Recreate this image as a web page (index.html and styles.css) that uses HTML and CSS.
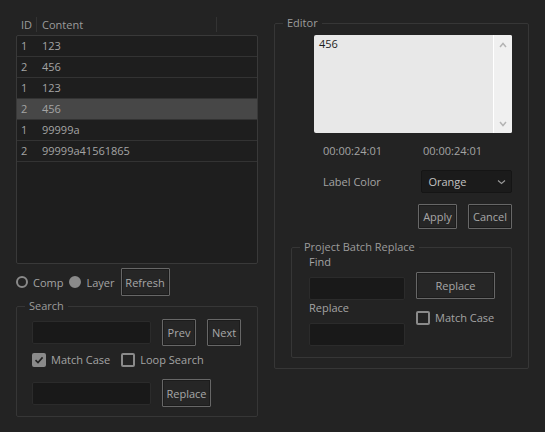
FILE: index.html
```html
<!DOCTYPE html>
<html lang="en">

<head>
    <title>Text Layer Editor</title>
    <meta charset="UTF-8">
    <link rel="stylesheet" href="styles.css">
</head>

<body>
    <div class="panel">
        <div class="left">
            <div class="list-head">
                <div class="col-id">ID</div>
                <div class="col-content">Content</div>
            </div>
            <div class="list">
                <div class="row"><span class="cell-id">1</span><span>123</span></div>
                <div class="row"><span class="cell-id">2</span><span>456</span></div>
                <div class="row"><span class="cell-id">1</span><span>123</span></div>
                <div class="row selected"><span class="cell-id">2</span><span>456</span></div>
                <div class="row"><span class="cell-id">1</span><span>99999a</span></div>
                <div class="row"><span class="cell-id">2</span><span>99999a41561865</span></div>
            </div>

            <div class="source-row">
                <label class="radio"><span class="dot"></span>Comp</label>
                <label class="radio"><span class="dot on"></span>Layer</label>
                <button class="btn refresh">Refresh</button>
            </div>

            <fieldset class="group search">
                <legend>Search</legend>
                <div class="group-body">
                    <div class="line">
                        <input class="field wide" type="text">
                        <button class="btn small">Prev</button>
                        <button class="btn small">Next</button>
                    </div>
                    <div class="checks">
                        <label class="check"><span class="box on"><svg width="10" height="10" viewBox="0 0 10 10"><path d="M1.5 5.2 L4 7.6 L8.6 2.4" fill="none" stroke="#222" stroke-width="1.6"/></svg></span>Match Case</label>
                        <label class="check"><span class="box"></span>Loop Search</label>
                    </div>
                    <div class="line">
                        <input class="field wide" type="text">
                        <button class="btn replace-small">Replace</button>
                    </div>
                </div>
            </fieldset>
        </div>

        <div class="right">
            <fieldset class="group editor">
                <legend>Editor</legend>
                <div class="editor-body">
                    <div class="text-box">
                        <div class="text-value">456</div>
                        <div class="scroll">
                            <svg width="8" height="6" viewBox="0 0 8 6"><path d="M1 5 L4 1.5 L7 5" fill="none" stroke="#b4b4b4" stroke-width="1.5"/></svg>
                            <svg width="8" height="6" viewBox="0 0 8 6"><path d="M1 1 L4 4.5 L7 1" fill="none" stroke="#b4b4b4" stroke-width="1.5"/></svg>
                        </div>
                    </div>

                    <div class="times">
                        <span class="time">00:00:24:01</span>
                        <span>00:00:24:01</span>
                    </div>

                    <div class="label-row">
                        <span class="label-name">Label Color</span>
                        <div class="select">
                            <span>Orange</span>
                            <svg width="9" height="6" viewBox="0 0 9 6"><path d="M1 1.5 L4.5 4.5 L8 1.5" fill="none" stroke="#9a9a9a" stroke-width="1.1"/></svg>
                        </div>
                    </div>

                    <div class="actions">
                        <button class="btn apply">Apply</button>
                        <button class="btn cancel">Cancel</button>
                    </div>

                    <fieldset class="group batch">
                        <legend>Project Batch Replace</legend>
                        <div class="batch-body">
                            <div class="batch-fields">
                                <div class="caption">Find</div>
                                <input class="field narrow" type="text">
                                <div class="caption second">Replace</div>
                                <input class="field narrow" type="text">
                            </div>
                            <div class="batch-side">
                                <button class="btn replace-big">Replace</button>
                                <label class="check"><span class="box"></span>Match Case</label>
                            </div>
                        </div>
                    </fieldset>
                </div>
            </fieldset>
        </div>
    </div>
</body>

</html>
```

FILE: styles.css
```css
body {
    margin: 0;
    background: #232323;
    font-family: "Open Sans", "Noto Sans", Arial, sans-serif;
    font-size: 11px;
    color: #a4a4a4;
}

.panel {
    display: flex;
    width: 545px;
    height: 432px;
}

/* left side */

.left {
    width: 242px;
    margin-left: 16px;
    padding-top: 17px;
}

.list-head {
    display: flex;
    height: 18px;
    line-height: 15px;
    color: #9c9c9c;
}

.col-id {
    width: 15px;
    padding-left: 5px;
    border-right: 1px solid #333;
    height: 15px;
}

.col-content {
    width: 174px;
    padding-left: 5px;
    border-right: 1px solid #333;
    height: 15px;
}

.list {
    height: 227px;
    background: #1e1e1e;
    border: 1px solid #393939;
    border-radius: 2px;
}

.row {
    display: flex;
    height: 20px;
    line-height: 20px;
    border-bottom: 1px solid #333;
    padding-left: 4px;
}

.row.selected {
    background: #474747;
}

.cell-id {
    width: 21px;
}

.source-row {
    display: flex;
    align-items: center;
    margin-top: 4px;
    height: 28px;
}

.radio {
    display: flex;
    align-items: center;
    margin-right: 6px;
}

.dot {
    width: 8px;
    height: 8px;
    border: 2px solid #8a8a8a;
    border-radius: 50%;
    margin-right: 5px;
}

.dot.on {
    background: #8a8a8a;
}

.btn {
    font-family: "Open Sans", "Noto Sans", Arial, sans-serif;
    font-size: 11px;
    color: #a8a8a8;
    background: #262626;
    border: 1px solid #676767;
    box-shadow: inset 0 0 0 1px #1c1c1c;
    border-radius: 1px;
    padding: 0;
    cursor: pointer;
}

.refresh {
    width: 49px;
    height: 28px;
}

.group {
    border: 1px solid #363636;
    border-radius: 2px;
    margin: 0;
    padding: 0;
    min-width: 0;
}

.group legend {
    margin-left: 8px;
    padding: 0 4px;
    line-height: 14px;
    color: #9c9c9c;
}

.search {
    margin-top: 3px;
    height: 116px;
}

.group-body {
    padding: 6px 0 0 15px;
}

.line {
    display: flex;
    align-items: center;
    gap: 11px;
}

.field {
    height: 21px;
    background: #191919;
    border: 1px solid #2b2b2b;
    border-radius: 2px;
    padding: 0;
    box-sizing: content-box;
}

.wide {
    width: 117px;
}

.small {
    width: 34px;
    height: 27px;
}

.replace-small {
    width: 49px;
    height: 28px;
}

.checks {
    display: flex;
    gap: 11px;
    height: 14px;
    margin: 7px 0 12px;
}

.check {
    display: flex;
    align-items: center;
    line-height: 14px;
}

.box {
    width: 10px;
    height: 10px;
    border: 2px solid #8a8a8a;
    border-radius: 2px;
    margin-right: 5px;
    display: flex;
    align-items: center;
    justify-content: center;
}

.box.on {
    background: #8a8a8a;
}

/* right side */

.right {
    width: 255px;
    margin-left: 16px;
    padding-top: 16px;
}

.editor {
    height: 351px;
}

.editor-body {
    padding: 5px 16px 0 39px;
}

.text-box {
    display: flex;
    height: 98px;
    background: #e8e8e8;
    border-radius: 2px;
}

.text-value {
    flex: 1;
    padding: 2px 5px;
    color: #1e1e1e;
    line-height: 14px;
}

.scroll {
    width: 18px;
    background: #f0f0f0;
    border-left: 1px solid #fff;
    display: flex;
    flex-direction: column;
    justify-content: space-between;
    align-items: center;
    padding: 7px 0 6px;
    border-radius: 0 2px 2px 0;
}

.times {
    display: flex;
    margin: 11px 0 0 9px;
    line-height: 14px;
}

.time {
    width: 100px;
}

.label-row {
    display: flex;
    align-items: center;
    margin: 12px 0 0 9px;
}

.label-name {
    width: 99px;
}

.select {
    display: flex;
    align-items: center;
    justify-content: space-between;
    width: 78px;
    height: 21px;
    padding: 0 5px 0 6px;
    background: #1b1b1b;
    border: 1px solid #151515;
    border-radius: 2px;
    color: #c2c2c2;
}

.actions {
    display: flex;
    justify-content: flex-end;
    gap: 11px;
    margin-top: 11px;
}

.apply {
    width: 39px;
    height: 25px;
}

.cancel {
    width: 44px;
    height: 25px;
}

.batch {
    margin: 11px 0 0 -23px;
    height: 116px;
}

.batch-body {
    display: flex;
    padding: 1px 0 0 17px;
}

.batch-fields {
    width: 96px;
}

.caption {
    line-height: 14px;
    margin-bottom: 8px;
}

.caption.second {
    margin-top: 1px;
}

.narrow {
    width: 94px;
}

.batch-side {
    margin: 17px 0 0 11px;
}

.replace-big {
    display: block;
    width: 79px;
    height: 27px;
    margin-bottom: 12px;
}
```
